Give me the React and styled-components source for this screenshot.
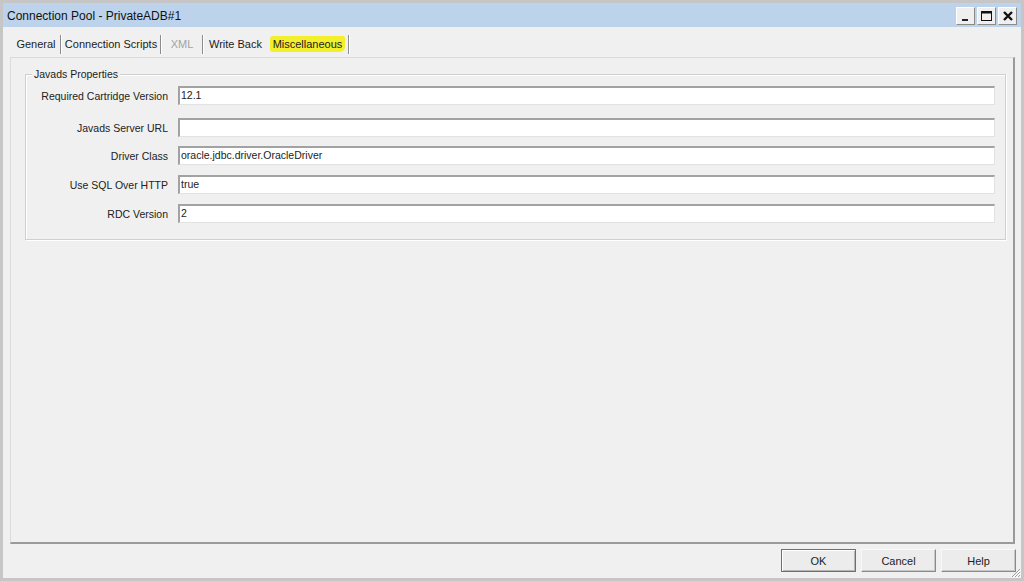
import React from 'react';
import styled, { createGlobalStyle } from 'styled-components';

const GlobalStyle = createGlobalStyle`
  html, body {
    margin: 0;
    padding: 0;
    background: #f0f0f0;
  }
  * { box-sizing: border-box; }
`;

const tabs = [
  { label: 'General', w: 48 },
  { label: 'Connection Scripts', w: 98 },
  { label: 'XML', w: 40, disabled: true },
  { label: 'Write Back', w: 63, noSep: true },
  { label: 'Miscellaneous', w: 81, active: true },
];

const fields = [
  { label: 'Required Cartridge Version', value: '12.1' },
  { label: 'Javads Server URL', value: '', gap: 13 },
  { label: 'Driver Class', value: 'oracle.jdbc.driver.OracleDriver', gap: 9 },
  { label: 'Use SQL Over HTTP', value: 'true' },
  { label: 'RDC Version', value: '2' },
];

export default function App() {
  return (
    <>
      <GlobalStyle />
      <Window>
        <TitleBar>
          <Title>Connection Pool - PrivateADB#1</Title>
          <Controls>
            <CtlButton>
              <svg width="9" height="9" viewBox="0 0 9 9">
                <rect x="1" y="7" width="6" height="2" fill="#222" />
              </svg>
            </CtlButton>
            <CtlButton>
              <svg width="11" height="10" viewBox="0 0 11 10">
                <rect x="0.5" y="0.5" width="10" height="9" fill="none" stroke="#111" />
                <rect x="0.5" y="0.5" width="10" height="2" fill="#111" />
              </svg>
            </CtlButton>
            <CtlButton>
              <svg width="10" height="10" viewBox="0 0 10 10">
                <path d="M1 1 L9 9 M9 1 L1 9" stroke="#111" strokeWidth="2.4" />
              </svg>
            </CtlButton>
          </Controls>
        </TitleBar>

        <TabRow>
          {tabs.map((t) => (
            <React.Fragment key={t.label}>
              <Tab $w={t.w} $disabled={t.disabled}>
                {t.active ? <Highlight>{t.label}</Highlight> : t.label}
              </Tab>
              {!t.noSep && <Sep />}
            </React.Fragment>
          ))}
        </TabRow>

        <Panel>
          <Group>
            <Legend>Javads Properties</Legend>
            <Fields>
              {fields.map((f) => (
                <Row key={f.label} $gap={f.gap}>
                  <Label>{f.label}</Label>
                  <Input>{f.value}</Input>
                </Row>
              ))}
            </Fields>
          </Group>
        </Panel>

        <Footer>
          <Button $default>OK</Button>
          <Button>Cancel</Button>
          <Button>Help</Button>
        </Footer>

        <Grip>
          <svg width="12" height="12" viewBox="0 0 12 12">
            <path d="M11 3 L3 11 M11 6 L6 11 M11 9 L9 11" stroke="#a0a0a0" strokeWidth="1" />
            <path d="M12 4 L4 12 M12 7 L7 12 M12 10 L10 12" stroke="#fff" strokeWidth="1" />
          </svg>
        </Grip>
      </Window>
    </>
  );
}

const Window = styled.div`
  position: relative;
  width: 1024px;
  height: 581px;
  border: 3px solid #c6c6c6;
  background: #f0f0f0;
  display: flex;
  flex-direction: column;
  font-family: "Liberation Sans", Arial, sans-serif;
  color: #1c1c1c;
  overflow: hidden;
`;

const TitleBar = styled.div`
  height: 24px;
  flex: none;
  background: #bcd3eb;
  display: flex;
  align-items: center;
  justify-content: space-between;
  padding: 0 4px 0 4px;
`;

const Title = styled.div`
  font-size: 12px;
  color: #111;
  padding-top: 1px;
`;

const Controls = styled.div`
  display: flex;
  gap: 2px;
  padding-top: 2px;
`;

const CtlButton = styled.div`
  width: 19px;
  height: 18px;
  background: #efefef;
  border: 1px solid;
  border-color: #ffffff #8a8a8a #8a8a8a #ffffff;
  display: flex;
  align-items: center;
  justify-content: center;
`;

const TabRow = styled.div`
  display: flex;
  align-items: center;
  height: 20px;
  margin-top: 7px;
  padding-left: 9px;
  flex: none;
`;

const Tab = styled.div`
  width: ${(p) => p.$w}px;
  text-align: center;
  font-size: 11px;
  color: ${(p) => (p.$disabled ? '#a3a3a3' : '#1c1c1c')};
  white-space: nowrap;
`;

const Highlight = styled.span`
  background: #f3ef2a;
  padding: 2px 3px;
  border-radius: 3px 2px 5px 3px;
`;

const Sep = styled.div`
  width: 2px;
  height: 19px;
  background: #8c8c8c;
  border-right: 1px solid #ffffff;
`;

const Panel = styled.div`
  flex: 1;
  margin: 3px 6px 0 7px;
  border: 1px solid;
  border-color: #dadada #9a9a9a #9a9a9a #dadada;
  border-bottom-width: 2px;
  border-right-width: 2px;
  padding: 16px 7px 0 14px;
`;

const Group = styled.div`
  position: relative;
  border: 1px solid #cfcfcf;
  box-shadow: inset 1px 1px 0 #ffffff, 1px 1px 0 #ffffff;
  padding: 11px 10px 16px 0;
`;

const Legend = styled.span`
  position: absolute;
  top: -7px;
  left: 6px;
  padding: 0 2px;
  background: #f0f0f0;
  font-size: 10.5px;
  line-height: 13px;
`;

const Fields = styled.div`
  display: flex;
  flex-direction: column;
  gap: 10px;
`;

const Row = styled.div`
  display: grid;
  grid-template-columns: 142px 1fr;
  column-gap: 10px;
  align-items: center;
  margin-top: ${(p) => (p.$gap ? p.$gap - 10 : 0)}px;
`;

const Label = styled.div`
  text-align: right;
  font-size: 10.5px;
  color: #222;
`;

const Input = styled.div`
  height: 19px;
  background: #ffffff;
  border-style: solid;
  border-width: 2px 1px 1px 2px;
  border-color: #a2a2a2 #e2e2e2 #e2e2e2 #a2a2a2;
  font-size: 10.5px;
  line-height: 15px;
  padding-left: 1px;
  color: #1c1c1c;
`;

const Footer = styled.div`
  flex: none;
  display: flex;
  justify-content: flex-end;
  gap: 5px;
  padding: 5px 5px 6px 0;
`;

const Button = styled.div`
  width: 75px;
  height: 23px;
  display: flex;
  align-items: center;
  justify-content: center;
  font-size: 11px;
  background: #ececec;
  border: 1px solid;
  border-color: ${(p) =>
    p.$default ? '#6f6f6f' : '#f8f8f8 #8a8a8a #8a8a8a #f8f8f8'};
  box-shadow: ${(p) =>
    p.$default ? 'inset 1px 1px 0 #ffffff, inset -1px -1px 0 #b5b5b5' : 'inset -1px -1px 0 #c8c8c8'};
`;

const Grip = styled.div`
  position: absolute;
  right: 0;
  bottom: 0;
  width: 12px;
  height: 12px;
  display: flex;
`;
